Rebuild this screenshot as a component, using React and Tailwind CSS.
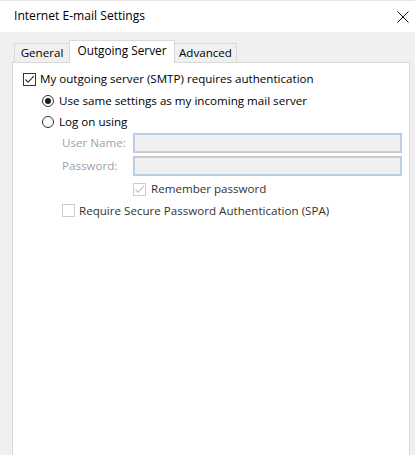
function CheckBox({ checked, dim }) {
  return (
    <span
      className={
        "w-[13px] h-[13px] shrink-0 border bg-white flex items-center justify-center " +
        (dim ? "border-[#cccccc]" : "border-[#333333]")
      }
    >
      {checked && (
        <svg width="11" height="11" viewBox="0 0 11 11" fill="none">
          <path d="M1.5 5.5 L4.2 8.3 L9.7 2.2" stroke={dim ? "#bdbdbd" : "#222222"} strokeWidth="1.1" />
        </svg>
      )}
    </span>
  );
}

function Radio({ on }) {
  return (
    <span className="w-[12px] h-[12px] shrink-0 rounded-full border border-[#333333] bg-white flex items-center justify-center">
      {on && <span className="w-[6px] h-[6px] rounded-full bg-[#1a1a1a]" />}
    </span>
  );
}

function Field({ label }) {
  return (
    <div className="h-[20px] flex items-center pl-[49px]">
      <span className="w-[71px] text-[#a0a0a0]">{label}</span>
      <div className="w-[269px] h-[20px] bg-[#f0f0f0] border border-[#c8c8c8] shadow-[inset_0_0_0_1px_#bcd2ea]" />
    </div>
  );
}

export default function App() {
  return (
    <div className="w-[415px] h-[455px] overflow-hidden bg-[#f0f0f0] text-[11.6px] font-medium text-black font-['Open_Sans',sans-serif]">
      <div className="h-[32px] bg-white border-t border-[#e6e6e6] flex items-center justify-between pl-[14px] pr-[6px]">
        <span className="text-[12.1px]">Internet E-mail Settings</span>
        <svg width="12" height="12" viewBox="0 0 12 12" fill="none">
          <path d="M0.5 0.5 L11.5 11.5 M11.5 0.5 L0.5 11.5" stroke="#111111" strokeWidth="1" />
        </svg>
      </div>

      <div className="h-[30px] flex items-end pl-[14px]">
        <div className="w-[55px] h-[19px] border-l border-t border-[#d9d9d9] flex items-center justify-center">
          General
        </div>
        <div className="relative z-10 w-[106px] h-[23px] -mb-px bg-white border-x border-t border-[#d9d9d9] flex items-center justify-center text-[11.8px] pb-[2px]">
          Outgoing Server
        </div>
        <div className="w-[62px] h-[19px] border-r border-t border-[#d9d9d9] flex items-center justify-center">
          Advanced
        </div>
      </div>

      <div className="ml-[12px] w-[398px] h-[400px] bg-white border border-[#d9d9d9] pt-[5px]">
        <div className="h-[22px] flex items-center gap-[4px] pl-[10px]">
          <CheckBox checked />
          <span>My outgoing server (SMTP) requires authentication</span>
        </div>
        <div className="h-[21px] flex items-center gap-[5px] pl-[29px]">
          <Radio on />
          <span>Use same settings as my incoming mail server</span>
        </div>
        <div className="h-[21px] flex items-center gap-[5px] pl-[29px]">
          <Radio />
          <span>Log on using</span>
        </div>
        <div className="mt-[1px]">
          <Field label="User Name:" />
        </div>
        <div className="mt-[3px]">
          <Field label="Password:" />
        </div>
        <div className="mt-[2px] h-[22px] flex items-center gap-[5px] pl-[120px] text-[#333333]">
          <CheckBox checked dim />
          <span>Remember password</span>
        </div>
        <div className="h-[21px] flex items-center gap-[4px] pl-[49px] text-[#333333]">
          <CheckBox dim />
          <span>Require Secure Password Authentication (SPA)</span>
        </div>
      </div>
    </div>
  );
}
